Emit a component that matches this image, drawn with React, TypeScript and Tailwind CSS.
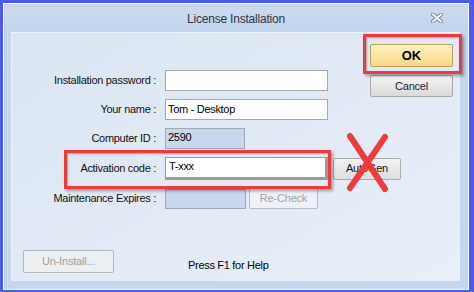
import React from "react";

const Label = ({ children }: { children: React.ReactNode }) => (
  <div className="w-[144px] text-right text-[11px] tracking-[-0.3px] text-[#111]">{children}</div>
);

export default function App() {
  return (
    <div className="w-[474px] h-[292px] bg-[#4a5af2] pt-[3px] pl-[3px] pr-[5px] pb-[2px] font-['Liberation_Sans',Arial,sans-serif]">
      <div className="h-full border border-[#f4f8ff] bg-[#c5d7ee] flex flex-col">
        {/* title bar */}
        <div className="relative h-[28px] flex items-center justify-center bg-gradient-to-b from-[#cadbf1] to-[#c2d4ec]">
          <span className="text-[12px] tracking-[-0.2px] text-[#2f3640] pt-[2px]">License Installation</span>
          <svg className="absolute left-[427px] top-[9px]" width="12" height="10" viewBox="0 0 12 10">
            <path d="M2 1.5 L10 8.5 M10 1.5 L2 8.5" stroke="#7d8ea6" strokeWidth="4" strokeLinecap="square" />
            <path d="M2 1.5 L10 8.5 M10 1.5 L2 8.5" stroke="#ffffff" strokeWidth="1.8" strokeLinecap="square" />
          </svg>
        </div>
        {/* content */}
        <div className="flex-1 pl-[7px] pr-[8px] pb-[8px]">
          <div className="relative h-full flex flex-col border-t border-l border-[#eef3fa] bg-gradient-to-br from-[#dbe5f3] to-[#e8eff9]">
            <div className="grid">
              {/* form */}
              <div className="col-start-1 row-start-1 flex flex-col pt-[37px]">
                <div className="flex items-center">
                  <Label>Installation password :</Label>
                  <div className="ml-[9px] w-[163px] h-[21px] border border-[#a7a7a7] bg-white" />
                </div>
                <div className="flex items-center mt-[8px]">
                  <Label>Your name :</Label>
                  <div className="ml-[9px] w-[163px] h-[21px] border border-[#a7a7a7] bg-white pl-[2px] text-[11px] tracking-[-0.3px] leading-[19px] text-black">
                    Tom - Desktop
                  </div>
                </div>
                <div className="flex items-center mt-[8px]">
                  <Label>Computer ID :</Label>
                  <div className="ml-[9px] w-[80px] h-[21px] border border-[#a2a8b2] bg-[#c8d7ee] pl-[2px] text-[11px] tracking-[-0.3px] leading-[16px] text-black">
                    2590
                  </div>
                </div>
                <div className="flex items-center mt-[8px]">
                  <Label>Activation code :</Label>
                  <div className="ml-[9px] w-[163px] h-[23px] border border-[#9c9c9c] border-r-[3px] border-b-[3px] bg-white pl-[3px] text-[11px] tracking-[-0.3px] leading-[17px] text-black">
                    T-xxx
                  </div>
                  <div className="ml-[5px] w-[68px] h-[22px] border border-[#acacac] rounded-[2px] bg-gradient-to-b from-[#f3f3f3] to-[#dedede] flex items-center justify-center text-[11px] tracking-[-0.2px] text-[#111]">
                    AutoGen
                  </div>
                </div>
                <div className="flex items-center mt-[8px]">
                  <Label>Maintenance Expires :</Label>
                  <div className="ml-[9px] w-[81px] h-[20px] border border-[#a2a8b2] bg-[#c8d7ee]" />
                  <div className="ml-[3px] w-[69px] h-[21px] border border-[#b9bdc2] rounded-[2px] bg-[#eef1f5] flex items-center justify-center text-[11px] tracking-[-0.2px] text-[#a3a3a3]">
                    Re-Check
                  </div>
                </div>
              </div>
              {/* buttons */}
              <div className="col-start-1 row-start-1 justify-self-end self-start flex flex-col pt-[11px] pr-[7px]">
                <div className="w-[83px] h-[23px] border border-[#c09f58] rounded-[2px] bg-gradient-to-b from-[#fff0c0] to-[#fbd784] flex items-center justify-center text-[13px] font-bold text-black">
                  OK
                </div>
                <div className="mt-[8px] w-[83px] h-[22px] border border-[#a9a9a9] rounded-[2px] bg-gradient-to-b from-[#f4f4f4] to-[#dadada] flex items-center justify-center text-[11px] tracking-[-0.2px] text-[#1a1f33]">
                  Cancel
                </div>
              </div>
            </div>
            {/* bottom row */}
            <div className="mt-auto pb-[8px] pl-[11px] flex items-start">
              <div className="w-[91px] h-[23px] border border-[#b3b8bd] rounded-[2px] bg-[#eceff3] flex items-center justify-center text-[11px] tracking-[-0.2px] text-[#a0a0a0]">
                Un-Install...
              </div>
              <div className="ml-[74px] pt-[7px] text-[11px] tracking-[-0.3px] text-black">Press F1 for Help</div>
            </div>

            {/* annotations */}
            <div className="absolute left-[52px] top-[117px] w-[267px] h-[39px] border-[3px] border-[#ee3a3f] shadow-[2px_2px_3px_rgba(0,0,0,0.35),inset_1px_1px_2px_rgba(0,0,0,0.3)]" />
            <div className="absolute left-[351px] top-[1px] w-[99px] h-[40px] border-[3px] border-[#ee3a3f] shadow-[2px_2px_3px_rgba(0,0,0,0.35),inset_1px_1px_2px_rgba(0,0,0,0.3)]" />
            <svg className="absolute left-[331px] top-[97px]" width="49" height="66" viewBox="0 0 49 66">
              <path d="M7 6 L42 59 M42 7 L7 58" stroke="#ef3a3f" strokeWidth="6" strokeLinecap="round" />
            </svg>
          </div>
        </div>
      </div>
    </div>
  );
}
